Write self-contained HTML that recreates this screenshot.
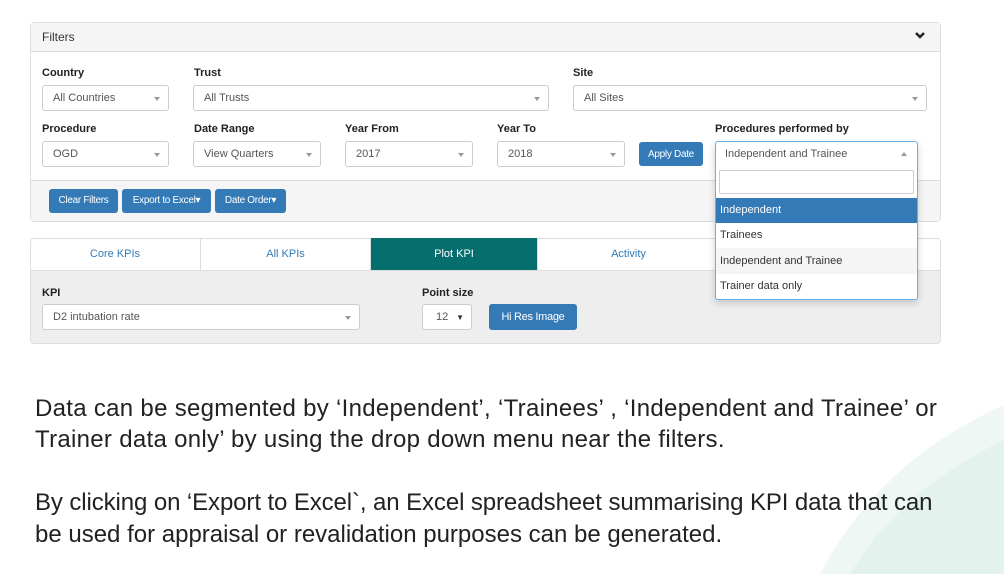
<!DOCTYPE html>
<html><head><meta charset="utf-8"><style>
*{box-sizing:border-box;margin:0;padding:0}
body{width:1004px;height:574px;background:#fff;position:relative;overflow:hidden;font-family:"Liberation Sans",Arial,sans-serif;font-size:11px;color:#333}
.a{position:absolute}
.lbl{position:absolute;font-weight:bold;font-size:11px;color:#222}
.sel{position:absolute;height:26px;border:1px solid #ccc;border-radius:3px;background:#fff;padding:0 10px;line-height:25px;color:#555;font-size:11px}
.sel:after{content:"";position:absolute;right:8px;top:11px;border:3px solid transparent;border-top:4px solid #999}
.btn{position:absolute;background:#337ab7;color:#fff;border-radius:3px;font-size:10px;text-align:center;letter-spacing:-0.3px}
.tab{position:absolute;top:238px;height:32px;line-height:33px;text-align:center;color:#337ab7;font-size:11px;border-right:1px solid #ddd}
.txt{position:absolute;left:35px;font-size:24px;color:#222;white-space:nowrap;font-family:"Liberation Sans",sans-serif;letter-spacing:0.3px}
</style></head><body>
<svg class="a" style="left:0;top:0" width="1004" height="574"><path d="M1004 405 Q880 460 820 574 L1004 574Z" fill="#eef7f3"/><path d="M1004 440 Q900 490 850 574 L1004 574Z" fill="#e3f2ec"/></svg>
<div class="a" style="left:30px;top:22px;width:911px;height:200px;border:1px solid #ddd;border-radius:4px;background:#fff"></div>
<div class="a" style="left:31px;top:23px;width:909px;height:29px;background:#f5f5f5;border-bottom:1px solid #ddd"></div>
<div class="a" style="left:42px;top:30px;font-size:12px;color:#333">Filters</div>
<svg class="a" style="left:914px;top:31px" width="12" height="10"><path d="M2 2 L6 6 L10 2" stroke="#222" stroke-width="2.5" fill="none"/></svg>
<div class="a" style="left:31px;top:180px;width:909px;height:41px;background:#f5f5f5;border-top:1px solid #ddd"></div>
<div class="lbl" style="left:42px;top:67px">Country</div>
<div class="lbl" style="left:194px;top:67px">Trust</div>
<div class="lbl" style="left:573px;top:67px">Site</div>
<div class="sel" style="left:42px;top:85px;width:127px">All Countries</div>
<div class="sel" style="left:193px;top:85px;width:356px">All Trusts</div>
<div class="sel" style="left:573px;top:85px;width:354px">All Sites</div>
<div class="lbl" style="left:42px;top:123px">Procedure</div>
<div class="lbl" style="left:194px;top:123px">Date Range</div>
<div class="lbl" style="left:345px;top:123px">Year From</div>
<div class="lbl" style="left:497px;top:123px">Year To</div>
<div class="lbl" style="left:715px;top:123px">Procedures performed by</div>
<div class="sel" style="left:42px;top:141px;width:127px">OGD</div>
<div class="sel" style="left:193px;top:141px;width:128px">View Quarters</div>
<div class="sel" style="left:345px;top:141px;width:128px">2017</div>
<div class="sel" style="left:497px;top:141px;width:128px">2018</div>
<div class="btn" style="left:639px;top:142px;width:64px;height:24px;line-height:25px">Apply Date</div>
<div class="btn" style="left:49px;top:189px;width:69px;height:24px;line-height:24px">Clear Filters</div>
<div class="btn" style="left:122px;top:189px;width:89px;height:24px;line-height:24px">Export to Excel▾</div>
<div class="btn" style="left:215px;top:189px;width:71px;height:24px;line-height:24px">Date Order▾</div>
<div class="a" style="left:30px;top:238px;width:911px;height:33px;border:1px solid #ddd;border-radius:4px 4px 0 0;background:#fff"></div>
<div class="tab" style="left:30px;width:171px">Core KPIs</div>
<div class="tab" style="left:201px;width:170px">All KPIs</div>
<div class="tab" style="left:371px;width:167px;background:#076e6e;color:#fff">Plot KPI</div>
<div class="tab" style="left:538px;width:182px">Activity</div>
<div class="a" style="left:30px;top:271px;width:911px;height:73px;border:1px solid #ddd;border-top:none;border-radius:0 0 4px 4px;background:#eee"></div>
<div class="lbl" style="left:42px;top:287px">KPI</div>
<div class="lbl" style="left:422px;top:287px">Point size</div>
<div class="sel" style="left:42px;top:304px;width:318px;height:26px">D2 intubation rate</div>
<div class="a" style="left:422px;top:304px;width:50px;height:26px;border:1px solid #ccc;border-radius:3px;background:#fff;line-height:25px;padding-left:13px;color:#555">12 <span style="position:absolute;right:7px;font-size:8px;color:#333">▼</span></div>
<div class="btn" style="left:489px;top:304px;width:88px;height:26px;line-height:27px;font-size:11px">Hi Res Image</div>
<div class="a" style="left:715px;top:141px;width:203px;height:159px;border:1px solid #66afe9;border-radius:3px;background:#fff;box-shadow:0 3px 8px rgba(0,0,0,.18)"></div>
<div class="a" style="left:725px;top:148px;color:#555">Independent and Trainee</div>
<svg class="a" style="left:900px;top:151px" width="8" height="6"><path d="M1 5 L4 1 L7 5Z" fill="#999"/></svg>
<div class="a" style="left:719px;top:170px;width:195px;height:24px;border:1px solid #ccc;border-radius:2px"></div>
<div class="a" style="left:716px;top:198px;width:201px;height:25px;background:#337ab7;color:#fff;line-height:25px;padding-left:4px">Independent</div>
<div class="a" style="left:716px;top:223px;width:201px;height:25px;line-height:25px;padding-left:4px">Trainees</div>
<div class="a" style="left:716px;top:248px;width:201px;height:26px;background:#f5f5f5;line-height:26px;padding-left:4px">Independent and Trainee</div>
<div class="a" style="left:716px;top:274px;width:201px;height:25px;line-height:25px;padding-left:4px">Trainer data only</div>
<div class="txt" style="top:395px">Data can be segmented by ‘Independent’, ‘Trainees’ , ‘Independent and Trainee’ or</div>
<div class="txt" style="top:426px">Trainer data only’ by using the drop down menu near the filters.</div>
<div class="txt" style="top:489px;letter-spacing:-0.1px">By clicking on ‘Export to Excel`, an Excel spreadsheet summarising KPI data that can</div>
<div class="txt" style="top:521px;letter-spacing:0px">be used for appraisal or revalidation purposes can be generated.</div>
</body></html>
